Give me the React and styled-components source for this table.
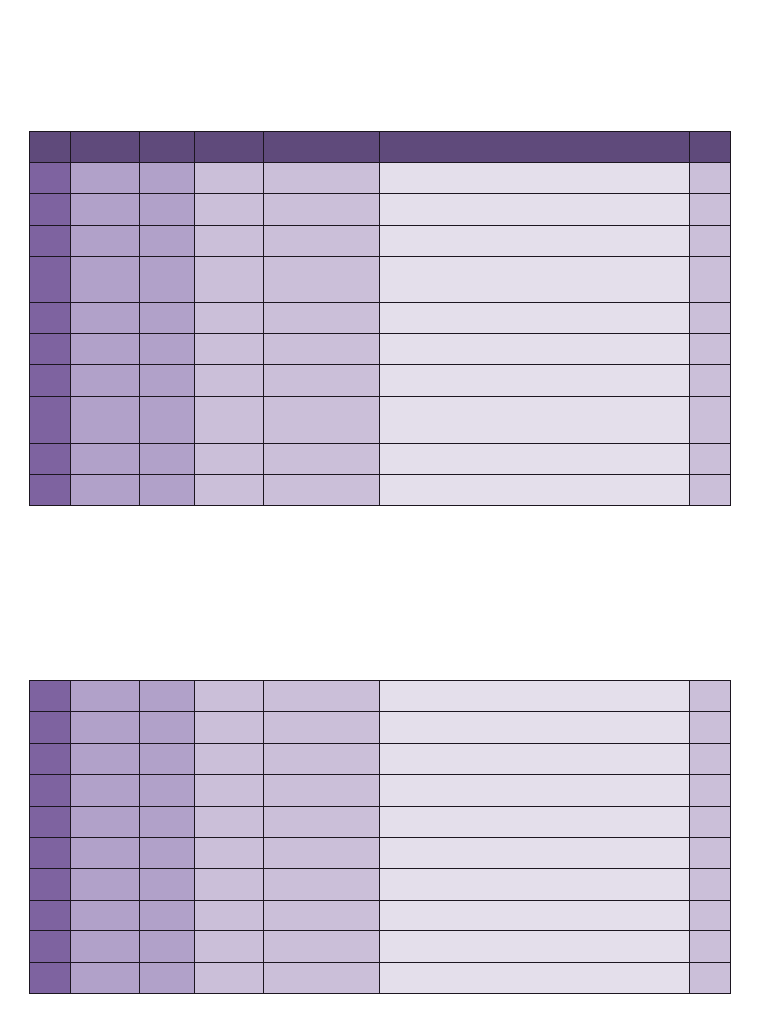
import React from "react";
import styled, { createGlobalStyle } from "styled-components";

const GlobalStyle = createGlobalStyle`
  html, body {
    margin: 0;
    padding: 0;
    background: #ffffff;
    font-family: "Liberation Sans", Arial, sans-serif;
  }
`;

const Page = styled.div`
  width: 768px;
  min-height: 1024px;
  box-sizing: border-box;
  padding: 131px 0 0 28.5px;
  display: flex;
  flex-direction: column;
  gap: 174px;
`;

const Grid = styled.table`
  width: 701.5px;
  table-layout: fixed;
  border-collapse: collapse;
  border: 1px solid #3c3940;
`;

const COLS = [41, 69, 55, 69, 116, 310, 41.5];
const BODY_COLORS = ["#7e63a0", "#b1a1c9", "#b1a1c9", "#cbbfd9", "#cbbfd9", "#e4dfeb", "#cbbfd9"];

const TOP_ROWS = [31, 32, 31, 46, 31, 31, 32, 47, 31, 31];
const BOTTOM_ROWS = [31, 32, 31, 32, 31, 31, 32, 30, 32, 31];

const Row = styled.tr`
  height: ${(p) => p.$h}px;
`;

const HeadCell = styled.th`
  padding: 0;
  background: #5f4a7b;
  border: 1px solid #1c1620;
`;

const Cell = styled.td`
  padding: 0;
  background: ${(p) => p.$bg};
  border: 1px solid #1c1620;
`;

function BodyRow({ h }) {
  return (
    <Row $h={h}>
      {BODY_COLORS.map((c, i) => (
        <Cell key={i} $bg={c} />
      ))}
    </Row>
  );
}

function Table({ header, rows }) {
  return (
    <Grid>
      <colgroup>
        {COLS.map((w, i) => (
          <col key={i} style={{ width: w }} />
        ))}
      </colgroup>
      {header && (
        <thead>
          <Row $h={31}>
            {COLS.map((_, i) => (
              <HeadCell key={i} />
            ))}
          </Row>
        </thead>
      )}
      <tbody>
        {rows.map((h, i) => (
          <BodyRow key={i} h={h} />
        ))}
      </tbody>
    </Grid>
  );
}

export default function App() {
  return (
    <>
      <GlobalStyle />
      <Page>
        <Table header rows={TOP_ROWS} />
        <Table rows={BOTTOM_ROWS} />
      </Page>
    </>
  );
}
